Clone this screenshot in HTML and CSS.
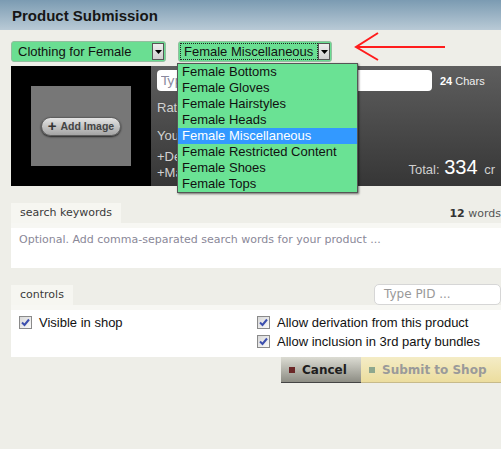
FILE: index.html
```html
<!DOCTYPE html>
<html>
<head>
<meta charset="utf-8">
<link rel="stylesheet" href="styles.css">
</head>
<body>
<div class="page">
  <header class="topbar"><h1>Product Submission</h1></header>
  <main class="content">
    <div class="selects">
      <div class="select select-a">
        <span class="select-text">Clothing for Female</span>
        <span class="select-btn"><svg width="7" height="4" viewBox="0 0 7 4"><path d="M0 0h7L3.5 4z" fill="#000"/></svg></span>
      </div>
      <div class="select select-b">
        <span class="select-text">Female Miscellaneous</span>
        <span class="select-btn"><svg width="7" height="4" viewBox="0 0 7 4"><path d="M0 0h7L3.5 4z" fill="#000"/></svg></span>
      </div>
    </div>

    <section class="preview">
      <div class="image-well">
        <div class="image-box">
          <button class="add-image"><span class="plus">+</span>Add Image</button>
        </div>
      </div>
      <div class="details">
        <div class="title-row">
          <div class="title-input"><span class="clip">Type a title</span></div>
          <span class="chars"><b>24</b> Chars</span>
        </div>
        <div class="details-body">
          <div class="lines">
            <div class="line line-rating">Rating</div>
            <div class="line line-you">Your price</div>
            <div class="line line-plus">+Details</div>
            <div class="line">+Materials</div>
          </div>
          <div class="total">Total: <span class="big">334</span> cr</div>
        </div>
      </div>
    </section>

    <div class="section-head">
      <div class="tab">search keywords</div>
      <div class="count"><b>12</b> words</div>
    </div>
    <div class="box search-box">
      <div class="placeholder">Optional. Add comma-separated search words for your product ...</div>
    </div>

    <div class="section-head controls-head">
      <div class="tab">controls</div>
      <div class="pid">Type PID ...</div>
    </div>
    <div class="box controls-box">
      <div class="col col-left">
        <label class="check"><span class="cb"><svg width="11" height="11" viewBox="0 0 11 11"><path d="M2 5.5l2.5 2.5L9 2.5" fill="none" stroke="#3c4fae" stroke-width="2"/></svg></span>Visible in shop</label>
      </div>
      <div class="col">
        <label class="check"><span class="cb"><svg width="11" height="11" viewBox="0 0 11 11"><path d="M2 5.5l2.5 2.5L9 2.5" fill="none" stroke="#3c4fae" stroke-width="2"/></svg></span>Allow derivation from this product</label>
        <label class="check"><span class="cb"><svg width="11" height="11" viewBox="0 0 11 11"><path d="M2 5.5l2.5 2.5L9 2.5" fill="none" stroke="#3c4fae" stroke-width="2"/></svg></span>Allow inclusion in 3rd party bundles</label>
      </div>
    </div>

    <div class="actions">
      <button class="btn btn-cancel"><span class="bullet"></span>Cancel</button>
      <button class="btn btn-submit"><span class="bullet"></span>Submit to Shop</button>
    </div>
  </main>

  <svg class="annot-arrow" width="100" height="40" viewBox="0 0 100 40">
    <path d="M95 19H6M28 5L6 19L28 32" fill="none" stroke="#ff1c1c" stroke-width="2"/>
  </svg>

  <ul class="dropdown">
    <li>Female Bottoms</li>
    <li>Female Gloves</li>
    <li>Female Hairstyles</li>
    <li>Female Heads</li>
    <li class="active">Female Miscellaneous</li>
    <li>Female Restricted Content</li>
    <li>Female Shoes</li>
    <li>Female Tops</li>
  </ul>
</div>
</body>
</html>
```

FILE: styles.css
```css
* { box-sizing: border-box; margin: 0; padding: 0; }
html, body { width: 501px; height: 449px; overflow: hidden; }
body {
  background: #eeeee8;
  font-family: "Liberation Sans", Arial, sans-serif;
  color: #111;
}
.page { position: relative; height: 449px; }

.topbar {
  height: 30px;
  background: linear-gradient(#7b9bb2, #b9cad6);
  padding-left: 12px;
  display: flex;
  align-items: center;
}
.topbar h1 { font-size: 15px; font-weight: bold; color: #161616; }

.content { padding-left: 11px; }

.selects { display: flex; gap: 12px; margin-top: 11px; height: 21px; }
.select {
  display: flex;
  align-items: center;
  height: 21px;
  padding: 1px;
  background: #6ade92;
  border: 1px solid #93bf9f;
  border-radius: 3px;
}
.select-a { width: 155px; }
.select-b { width: 154px; }
.select-text { flex: 1; font-size: 13px; line-height: 17px; height: 17px; padding-left: 5px; white-space: nowrap; overflow: hidden; }
.select-b .select-text { outline: 1px dotted #222; outline-offset: -1px; padding-left: 4px; }
.select-btn {
  width: 12px;
  height: 17px;
  background: linear-gradient(#eeeeee, #cfcfcf);
  border: 1px solid #555;
  display: flex;
  align-items: center;
  justify-content: center;
}

.preview { display: flex; margin-top: 4px; height: 120px; }
.image-well { width: 140px; background: #000; display: flex; align-items: center; justify-content: center; }
.image-box { width: 100px; height: 80px; background: #777; display: flex; align-items: center; justify-content: center; }
.add-image {
  width: 80px;
  height: 19px;
  border-radius: 10px;
  background: linear-gradient(#e4e4e4, #a4a4a4);
  border: 1px solid #5e5e5e;
  box-shadow: 0 1px 2px rgba(0,0,0,.7);
  font: bold 10.5px "Liberation Sans", Arial, sans-serif;
  color: #444;
  display: flex;
  align-items: center;
  justify-content: center;
  gap: 4px;
}
.add-image .plus { font-size: 15px; line-height: 15px; color: #333; margin-top: -1px; }

.details {
  flex: 1;
  background: linear-gradient(#5e5e5e, #363636);
  padding: 4px 6px 5px 6px;
  color: #d2d2d2;
  display: flex;
  flex-direction: column;
}
.title-row { display: flex; align-items: center; gap: 8px; }
.title-input {
  width: 275px;
  height: 21px;
  background: #fff;
  border-radius: 4px;
  font: 13px "DejaVu Sans", Verdana, sans-serif;
  color: #8a8a9e;
  padding-left: 4px;
  line-height: 21px;
}
.clip { display: block; width: 16px; overflow: hidden; white-space: nowrap; }
.chars { font-size: 11px; color: #f0f0f0; }
.chars b { color: #fff; }
.details-body { flex: 1; display: flex; justify-content: space-between; align-items: flex-end; }
.lines { font-size: 13px; width: 20px; overflow: hidden; white-space: nowrap; }
.line { line-height: 16px; }
.line-rating { margin-top: 0; }
.line-you { margin-top: 12px; }
.line-plus { margin-top: 5px; }
.total { font-size: 13px; color: #cfcfcf; line-height: 22px; }
.total .big { font-size: 20px; color: #fff; margin: 0 3px 0 1px; }

.section-head { display: flex; justify-content: space-between; align-items: flex-end; margin-top: 17px; height: 20px; }
.tab {
  background: #f6f6f1;
  height: 20px;
  line-height: 17px;
  padding: 3px 9px 0;
  font: 11px "DejaVu Sans", Verdana, sans-serif;
  color: #3a3a3a;
}
.count { font: 11px "DejaVu Sans", Verdana, sans-serif; color: #555; align-self: center; }
.count b { color: #333; }
.box { background: #fff; border-top: 5px solid #f7f7f3; }
.search-box { height: 45px; padding: 5px 8px 0; }
.placeholder { font: 11px "DejaVu Sans", Verdana, sans-serif; color: #8a8898; line-height: 14px; }

.controls-head { margin-top: 16px; height: 21px; }
.pid {
  width: 127px;
  height: 21px;
  background: #fff;
  border: 1px solid #d6d6d6;
  border-radius: 5px;
  font: 12px "DejaVu Sans", Verdana, sans-serif;
  color: #999;
  line-height: 19px;
  padding-left: 9px;
}
.controls-box { height: 52px; display: flex; padding-top: 3px; }
.col { display: flex; flex-direction: column; }
.col-left { width: 246px; padding-left: 8px; }
.check { display: flex; align-items: center; gap: 7px; height: 19px; font-size: 13px; color: #111; }
.cb {
  width: 13px;
  height: 13px;
  border: 1px solid #8a8a8a;
  background: linear-gradient(135deg, #d8d8d8, #fafafa);
  display: flex;
  align-items: center;
  justify-content: center;
}

.actions { display: flex; justify-content: flex-end; }
.btn {
  height: 26px;
  border: none;
  display: flex;
  align-items: center;
  gap: 7px;
  padding-left: 8px;
  font: bold 12px "DejaVu Sans", Verdana, sans-serif;
}
.bullet { width: 6px; height: 6px; }
.btn-cancel {
  width: 80px;
  background: linear-gradient(#dcdcd3, #8d8d84);
  border-bottom: 1px solid #444;
  color: #1e1e1e;
}
.btn-cancel .bullet { background: #6b2727; }
.btn-submit {
  width: 140px;
  background: linear-gradient(#f4ecc6, #ecdd9e);
  border-bottom: 1px solid #c7ba8a;
  color: #9a9a9a;
  padding-left: 8px;
}
.btn-submit .bullet { background: #8ea78e; }

.annot-arrow { position: absolute; left: 350px; top: 28px; }

.dropdown {
  position: absolute;
  left: 177px;
  top: 63px;
  width: 181px;
  background: #6ae294;
  border: 1px solid #555;
  box-shadow: 1px 1px 2px rgba(0,0,0,.55);
  list-style: none;
}
.dropdown li { height: 16px; line-height: 16px; font-size: 13px; padding-left: 4px; color: #111; white-space: nowrap; }
.dropdown li.active { background: #3399ff; color: #fff; }
```
